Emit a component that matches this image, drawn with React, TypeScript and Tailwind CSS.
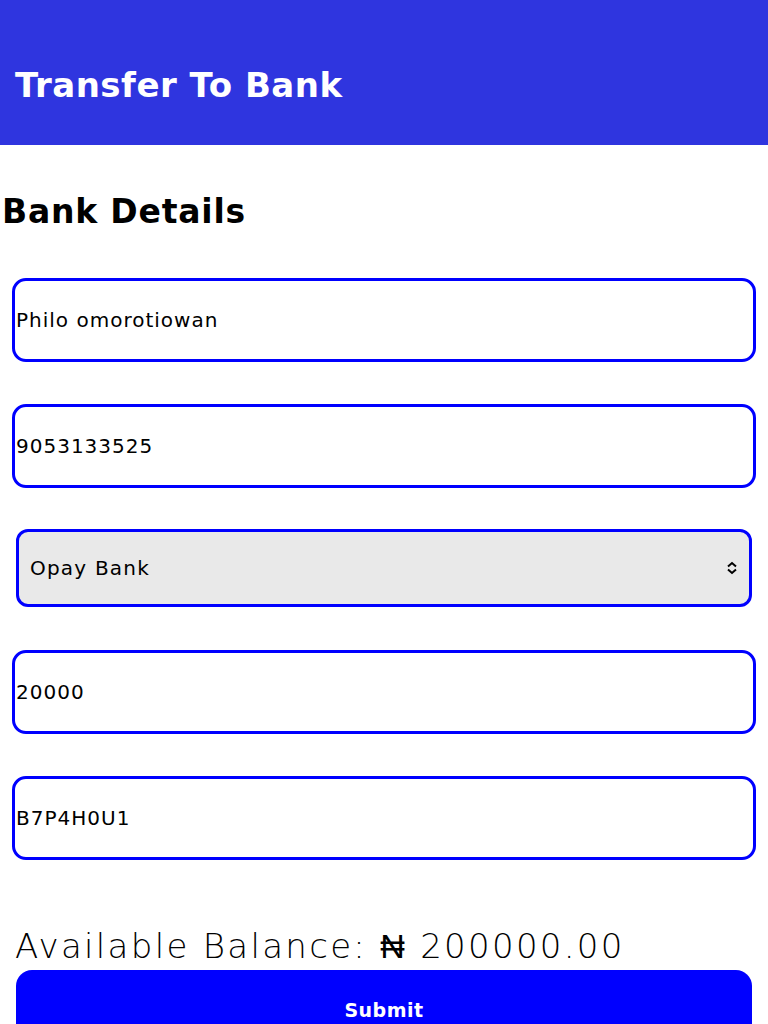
import React from 'react';

const fields = ['Philo omorotiowan', '9053133525'];
const fields2 = ['20000', 'B7P4H0U1'];

function Field({ value }: { value: string }) {
  return (
    <input
      readOnly
      value={value}
      className="block w-full h-[84px] px-[1px] border-[3px] border-[#0000ff] rounded-[14px] bg-white text-[20px] tracking-[1px] text-black outline-none"
    />
  );
}

export default function App() {
  return (
    <div className="min-h-screen bg-white font-['DejaVu_Sans',sans-serif] text-black">
      <header className="h-[145px] bg-[#2f35df] flex items-center pt-[24px] px-[15px]">
        <h1 className="text-[34px] font-bold text-white leading-none tracking-[0.5px]">Transfer To Bank</h1>
      </header>

      <h2 className="mt-[50px] pl-[2px] text-[33px] font-bold leading-none tracking-[0.8px]">Bank Details</h2>

      <div className="mt-[50px] px-[12px] flex flex-col">
        <div className="flex flex-col gap-[42px]">
          {fields.map(v => (
            <Field key={v} value={v} />
          ))}
        </div>

        <div className="relative mt-[41px] mx-[4px]">
          <select
            defaultValue="opay"
            className="appearance-none block w-full h-[78px] pl-[11px] border-[3px] border-[#0000ff] rounded-[12px] bg-[#e9e9e9] text-[20px] tracking-[1.2px] text-black outline-none"
          >
            <option value="opay">Opay Bank</option>
          </select>
          <svg
            className="absolute right-[14px] top-1/2 -translate-y-1/2 pointer-events-none"
            width="12"
            height="14"
            viewBox="0 0 12 14"
            fill="none"
            stroke="black"
            strokeWidth="2"
          >
            <path d="M2 5.5 6 2l4 3.5" />
            <path d="M2 8.5 6 12l4-3.5" />
          </svg>
        </div>

        <div className="mt-[43px] flex flex-col gap-[42px]">
          {fields2.map(v => (
            <Field key={v} value={v} />
          ))}
        </div>

        <p className="mt-[69px] pl-[3px] text-[34px] font-extralight leading-none tracking-[2.3px]">Available Balance: ₦ 200000.00</p>

        <button className="mt-[7px] mx-[4px] h-[80px] rounded-[16px] bg-[#0000ff] text-white text-[19px] font-bold tracking-[0.5px]">
          Submit
        </button>
      </div>
    </div>
  );
}
